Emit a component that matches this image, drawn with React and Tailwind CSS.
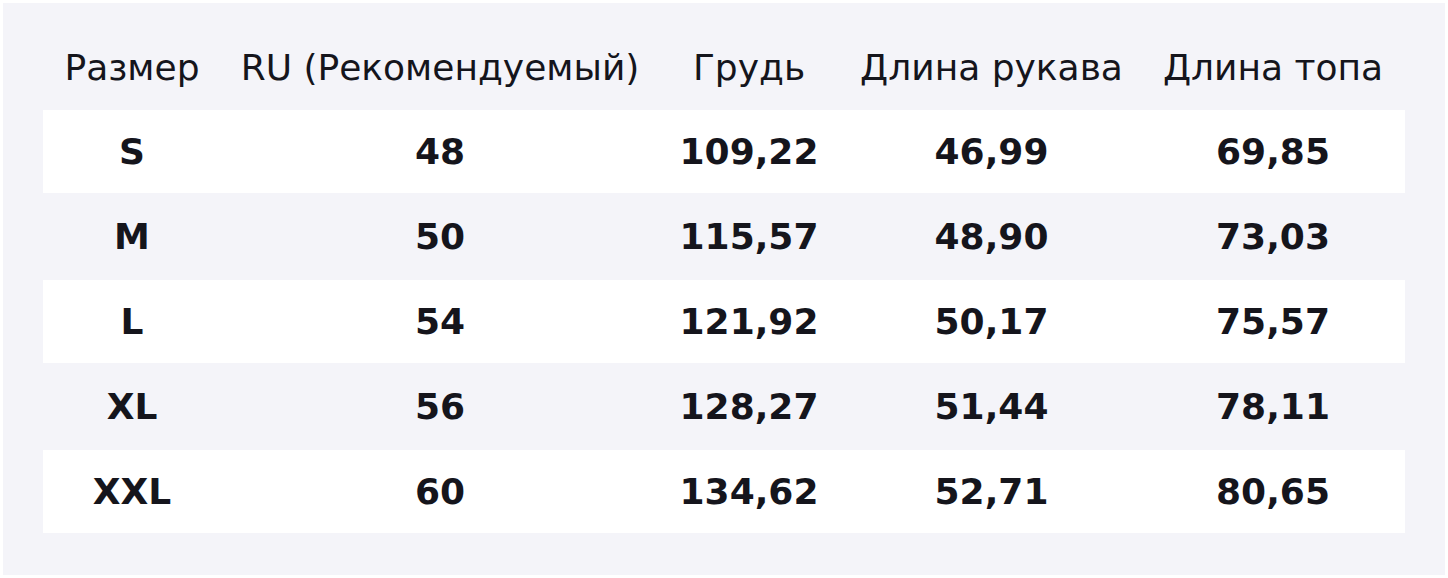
const headers = ['Размер', 'RU (Рекомендуемый)', 'Грудь', 'Длина рукава', 'Длина топа']

const rows = [
  ['S', '48', '109,22', '46,99', '69,85'],
  ['M', '50', '115,57', '48,90', '73,03'],
  ['L', '54', '121,92', '50,17', '75,57'],
  ['XL', '56', '128,27', '51,44', '78,11'],
  ['XXL', '60', '134,62', '52,71', '80,65'],
]

const cols = 'grid grid-cols-[178px_438px_180px_305px_258px]'

export default function App() {
  return (
    <div className="w-[1448px] h-[578px] bg-white p-[3px] font-['DejaVu_Sans',sans-serif] text-[#15151c]">
      <div className="w-[1442px] h-[572px] bg-[#f4f4f9] px-[40px] pt-[22px]">
        {/* Header */}
        <div className={`${cols} h-[85px] items-center text-[36px] text-center`}>
          {headers.map(h => (
            <div key={h} className="whitespace-nowrap">{h}</div>
          ))}
        </div>

        {/* Size rows */}
        {rows.map((row, i) => (
          <div
            key={row[0]}
            className={`${cols} items-center text-[36px] font-bold text-center ${i % 2 === 0 ? 'h-[83px] bg-white' : 'h-[87px]'}`}
          >
            {row.map((cell, j) => (
              <div key={j}>{cell}</div>
            ))}
          </div>
        ))}
      </div>
    </div>
  )
}
